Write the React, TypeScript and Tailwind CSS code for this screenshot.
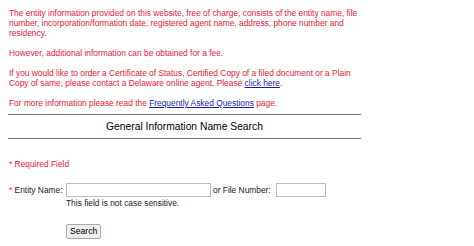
export default function App() {
  return (
    <div className="h-[246px] w-[474px] overflow-hidden bg-white font-['Liberation_Sans',Arial,sans-serif] text-[8.4px] leading-[10px]">
      <div className="w-[361px] pl-[8px] pt-[8px]">
        <div className="space-y-[10px] whitespace-nowrap pl-px text-[#e8173a]">
          <p>
            The entity information provided on this website, free of charge, consists of the entity name, file
            <br />
            number, incorporation/formation date, registered agent name, address, phone number and
            <br />
            residency.
          </p>
          <p>However, additional information can be obtained for a fee.</p>
          <p>
            If you would like to order a Certificate of Status, Certified Copy of a filed document or a Plain
            <br />
            Copy of same, please contact a Delaware online agent. Please{" "}
            <a href="#" className="text-[#1a1aa6] underline">
              click here
            </a>
            .
          </p>
          <p>
            For more information please read the{" "}
            <a href="#" className="text-[#1a1aa6] underline">
              Frequently Asked Questions
            </a>{" "}
            page.
          </p>
        </div>
        <div className="mt-[6px] border-y border-[#777] py-[6px] text-center text-[10.3px] leading-[11px] text-black">
          General Information Name Search
        </div>
      </div>

      <div className="pl-[9px] pt-[20px] text-[#e8173a]">* Required Field</div>

      <div className="mt-[14px] flex items-start pl-[9px] text-[#222]">
        <div className="w-[57px] whitespace-nowrap pt-[2px]">
          <span className="text-[#e8173a]">*</span> Entity Name:
        </div>
        <div>
          <div className="flex items-center whitespace-nowrap">
            <input className="h-[14px] w-[145px] border border-[#bbb] bg-white" />
            <span className="ml-[2px]">or File Number:</span>
            <input className="ml-[5px] h-[14px] w-[50px] border border-[#bbb] bg-white" />
          </div>
          <div className="mt-px">This field is not case sensitive.</div>
          <button className="mt-[16px] h-[15px] rounded-[2px] border border-[#aaa] bg-[#eee] px-[3px] text-[8.6px] leading-[9px] text-black">
            Search
          </button>
        </div>
      </div>
    </div>
  );
}
